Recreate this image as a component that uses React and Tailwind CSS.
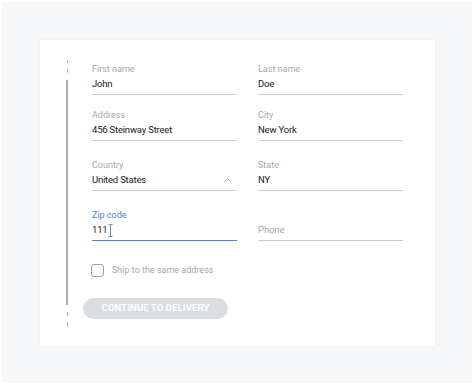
import React from "react";

const font = { fontFamily: "Roboto, 'Noto Sans', sans-serif" };

function Field({ label, value, active, placeholder, chevron }) {
  return (
    <div className="flex flex-col">
      {placeholder ? (
        <>
          <div className="h-[14px]" />
          <div className="h-[16px] text-[9.5px] leading-[16px] tracking-[-0.1px] text-[#a3a8ae]">{placeholder}</div>
        </>
      ) : (
        <>
          <div className={`h-[14px] text-[9px] leading-[14px] ${active ? "text-[#4a86e8]" : "text-[#a3a8ae]"}`}>{label}</div>
          <div className="flex h-[16px] items-center text-[9.5px] leading-[16px] tracking-[-0.2px] text-[#202124]">
            <span>{value}</span>
            {active && (
              <svg className="ml-[1px]" width="5" height="13" viewBox="0 0 5 13">
                <path d="M0.5 0.5 H4.5 M2.5 0.5 V12.5 M0.5 12.5 H4.5" fill="none" stroke="#6f8fc4" strokeWidth="1" />
              </svg>
            )}
            {chevron && (
              <svg className="ml-auto mr-[5px]" width="9" height="6" viewBox="0 0 9 6">
                <path d="M1 5 L4.5 1.5 L8 5" fill="none" stroke="#b5b9be" strokeWidth="1" />
              </svg>
            )}
          </div>
        </>
      )}
      <div className="h-[2px]" />
      <div className={`h-[1px] w-full ${active ? "bg-[#4a86e8]" : "bg-[#c9ccd1]"}`} />
    </div>
  );
}

export default function App() {
  return (
    <div className="h-[385px] w-[474px] bg-white p-[2px]" style={font}>
      <div className="h-full w-full bg-[#f6f7f9] pl-[38px] pt-[38px]">
        <div className="flex h-[306px] w-[395px] bg-white shadow-[0_0_3px_rgba(0,0,0,0.06)]">
          {/* rail */}
          <div className="ml-[26px] flex w-[2px] flex-col items-center pt-[20px]">
            <div className="h-[3px] w-[1px] bg-[#a9aeb6]" />
            <div className="mt-[6px] h-[4px] w-[1px] bg-[#a9aeb6]" />
            <div className="mt-[7px] h-[225px] w-[1.5px] bg-[#a9aeb6]" />
            <div className="mt-[7px] h-[4px] w-[1px] bg-[#a9aeb6]" />
            <div className="mt-[6px] h-[5px] w-[1px] bg-[#a9aeb6]" />
          </div>
          {/* form */}
          <div className="ml-[24px] flex w-[311px] flex-col pt-[22px]">
            <div className="grid grid-cols-[145px_145px] gap-x-[21px]">
              <Field label="First name" value="John" />
              <Field label="Last name" value="Doe" />
            </div>
            <div className="mt-[13px] grid grid-cols-[145px_145px] gap-x-[21px]">
              <Field label="Address" value="456 Steinway Street" />
              <Field label="City" value="New York" />
            </div>
            <div className="mt-[17px] grid grid-cols-[145px_145px] gap-x-[21px]">
              <Field label="Country" value="United States" chevron />
              <Field label="State" value="NY" />
            </div>
            <div className="mt-[17px] grid grid-cols-[145px_145px] gap-x-[21px]">
              <Field label="Zip code" value="111" active />
              <Field placeholder="Phone" />
            </div>
            <div className="mt-[23px] flex items-center">
              <div className="ml-[-1px] h-[13px] w-[13px] rounded-[3px] border-[1.5px] border-[#9ea3a9]" />
              <span className="ml-[8px] text-[9px] text-[#a3a8ae]">Ship to the same address</span>
            </div>
            <div className="ml-[-9px] mt-[20px] flex h-[21px] w-[145px] items-center justify-center rounded-full bg-[#dadde2] text-[9.5px] font-bold tracking-[0.1px] text-white">
              CONTINUE TO DELIVERY
            </div>
          </div>
        </div>
      </div>
    </div>
  );
}
